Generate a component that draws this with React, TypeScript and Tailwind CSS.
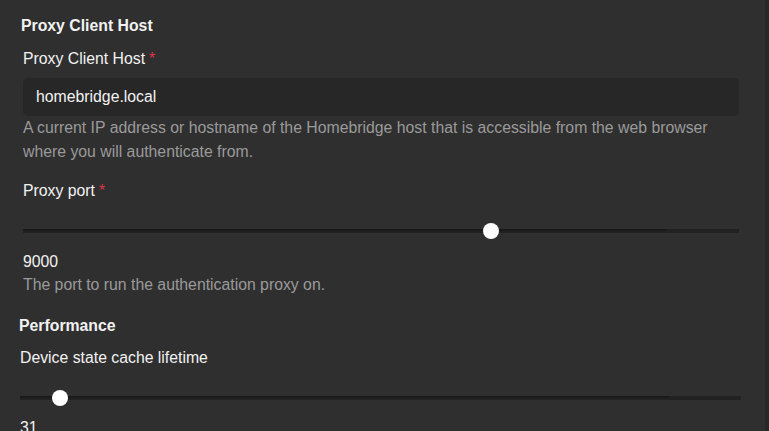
import React from "react";

function Slider({ pct }: { pct: number }) {
  return (
    <div className="relative h-[32px]">
      <div className="absolute left-0 right-0 top-[14px] h-[4px] bg-[#222222]">
        <div className="h-[2px] w-[90%] bg-[#1a1a1a]" />
      </div>
      <div
        className="absolute top-[8px] h-[16px] w-[16px] -translate-x-1/2 rounded-full bg-white"
        style={{ left: `${pct}%` }}
      />
    </div>
  );
}

function Req() {
  return <span className="ml-[4px] text-[#dc3545]">*</span>;
}

export default function App() {
  return (
    <div
      className="flex h-[431px] w-[769px] overflow-hidden bg-[#2f2f2f] text-[15.8px] text-[#f2f2f2]"
      style={{ fontFamily: '"Liberation Sans", Arial, sans-serif' }}
    >
      <div className="flex-1">
        {/* Proxy Client Host */}
        <div className="pt-[16px] pl-[21px] pr-[26px]">
          <div className="h-[20px] font-bold leading-[20px]">Proxy Client Host</div>
          <div className="mt-[13px] pl-[2px]">
            <div className="h-[20px] leading-[20px]">
              Proxy Client Host
              <Req />
            </div>
            <div className="mt-[9px] flex h-[38px] items-center rounded-[5px] bg-[#272727] pl-[13px]">
              homebridge.local
            </div>
            <div className="leading-[24px] text-[#9a9a9a]">
              A current IP address or hostname of the Homebridge host that is accessible from the web browser
              where you will authenticate from.
            </div>

            <div className="mt-[17px] h-[20px] leading-[20px]">
              Proxy port
              <Req />
            </div>
            <div className="mt-[14px]">
              <Slider pct={65.4} />
            </div>
            <div className="mt-[5px] h-[20px] leading-[20px]">9000</div>
            <div className="mt-[1px] leading-[24px] text-[#9a9a9a]">
              The port to run the authentication proxy on.
            </div>
          </div>
        </div>

        {/* Performance */}
        <div className="pt-[19px] pl-[19px] pr-[24px]">
          <div className="h-[20px] font-bold leading-[20px]">Performance</div>
          <div className="mt-[12px] pl-[1px]">
            <div className="h-[20px] leading-[20px]">Device state cache lifetime</div>
            <div className="mt-[14px]">
              <Slider pct={5.5} />
            </div>
            <div className="mt-[4px] h-[20px] leading-[20px]">31</div>
          </div>
        </div>
      </div>
      <div className="w-[4px] bg-[#282828]" />
    </div>
  );
}
